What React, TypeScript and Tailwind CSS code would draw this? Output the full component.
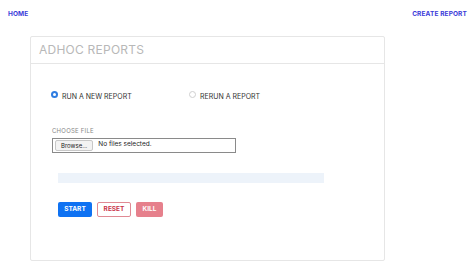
import React from 'react';

const App: React.FC = () => {
  return (
    <div className="w-[474px] h-[271px] bg-white relative overflow-hidden" style={{ fontFamily: 'Inter, "Liberation Sans", sans-serif' }}>
      {/* Top nav */}
      <div className="flex justify-between items-center pl-2 pr-[7px] pt-[10px] h-[20px]">
        <a className="text-[6.5px] font-bold text-[#3b3bd9] tracking-[0.02em]">HOME</a>
        <a className="text-[6.5px] font-bold text-[#3b3bd9] tracking-[0.02em]">CREATE REPORT</a>
      </div>

      {/* Card */}
      <div className="ml-[30px] mt-[16px] w-[355px] h-[225px] border border-[#e6e6e6] rounded-[2px]">
        <div className="h-[27px] border-b border-[#e6e6e6] flex items-center pl-[8px]">
          <h2 className="text-[12px] text-[#b8b8b8] tracking-[0.02em]">ADHOC REPORTS</h2>
        </div>

        <div className="pl-[20px] pt-[28px]">
          {/* Radios */}
          <div className="flex items-start">
            <label className="flex items-start w-[138px]">
              <span className="w-[7px] h-[7px] rounded-full bg-[#2f7de1] flex items-center justify-center mt-[-1px]">
                <span className="w-[3px] h-[3px] rounded-full bg-white" />
              </span>
              <span className="ml-[4px] text-[7px] text-[#333]">RUN A NEW REPORT</span>
            </label>
            <label className="flex items-start">
              <span className="w-[7px] h-[7px] rounded-full border border-[#cfcfcf] bg-white mt-[-1px]" />
              <span className="ml-[4px] text-[7px] text-[#333]">RERUN A REPORT</span>
            </label>
          </div>

          {/* File */}
          <div className="mt-[24px] pl-[1px]">
            <div className="text-[6px] text-[#888] tracking-[0.04em] leading-[8px]">CHOOSE FILE</div>
            <div className="mt-[3px] w-[184px] h-[15px] border border-[#8a8a8a] flex items-center px-[2px]">
              <span className="h-[11px] px-[5px] flex items-center text-[6px] text-[#222] bg-[#f3f3f3] border border-[#c8c8c8] rounded-[2px]">Browse...</span>
              <span className="ml-[5px] text-[6.5px] text-[#222]">No files selected.</span>
            </div>
          </div>

          {/* Progress */}
          <div className="mt-[20px] ml-[7px] w-[266px] h-[10px] bg-[#edf3fa]" />

          {/* Buttons */}
          <div className="mt-[19px] ml-[7px] flex gap-[5px]">
            <button className="w-[34px] h-[15px] rounded-[2px] bg-[#0f72f2] text-white text-[6.5px] leading-none font-bold flex items-center justify-center">START</button>
            <button className="w-[34px] h-[15px] rounded-[2px] border border-[#e08a94] text-[#c9344a] text-[6.5px] leading-none font-bold flex items-center justify-center">RESET</button>
            <button className="w-[27px] h-[15px] rounded-[2px] bg-[#e6808c] text-white text-[6.5px] leading-none font-bold flex items-center justify-center">KILL</button>
          </div>
        </div>
      </div>
    </div>
  );
};

export default App;
